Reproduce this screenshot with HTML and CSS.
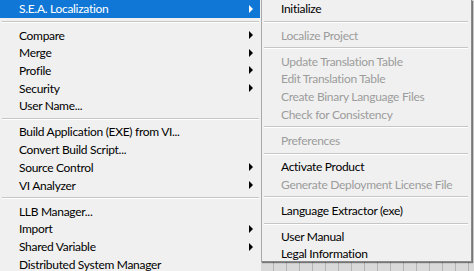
FILE: index.html
```html
<!DOCTYPE html>
<html>
<head>
<meta charset="utf-8">
<link rel="stylesheet" href="styles.css">
</head>
<body>
<div class="screen">
  <div class="menu">
    <div class="item active"><span>S.E.A. Localization</span><i class="arrow"></i></div>
    <div class="sep"></div>
    <div class="item"><span>Compare</span><i class="arrow"></i></div>
    <div class="item"><span>Merge</span><i class="arrow"></i></div>
    <div class="item"><span>Profile</span><i class="arrow"></i></div>
    <div class="item"><span>Security</span><i class="arrow"></i></div>
    <div class="item"><span>User Name...</span></div>
    <div class="sep"></div>
    <div class="item"><span>Build Application (EXE) from VI...</span></div>
    <div class="item"><span>Convert Build Script...</span></div>
    <div class="item"><span>Source Control</span><i class="arrow"></i></div>
    <div class="item"><span>VI Analyzer</span><i class="arrow"></i></div>
    <div class="sep"></div>
    <div class="item"><span>LLB Manager...</span></div>
    <div class="item"><span>Import</span><i class="arrow"></i></div>
    <div class="item"><span>Shared Variable</span><i class="arrow"></i></div>
    <div class="item"><span>Distributed System Manager</span></div>
  </div>
  <div class="submenu">
    <div class="item"><span>Initialize</span></div>
    <div class="sep"></div>
    <div class="item disabled"><span>Localize Project</span></div>
    <div class="sep"></div>
    <div class="item disabled"><span>Update Translation Table</span></div>
    <div class="item disabled"><span>Edit Translation Table</span></div>
    <div class="item disabled"><span>Create Binary Language Files</span></div>
    <div class="item disabled"><span>Check for Consistency</span></div>
    <div class="sep"></div>
    <div class="item disabled"><span>Preferences</span></div>
    <div class="sep"></div>
    <div class="item"><span>Activate Product</span></div>
    <div class="item disabled"><span>Generate Deployment License File</span></div>
    <div class="sep"></div>
    <div class="item"><span>Language Extractor (exe)</span></div>
    <div class="sep"></div>
    <div class="item"><span>User Manual</span></div>
    <div class="item last"><span>Legal Information</span></div>
  </div>
</div>
</body>
</html>
```
FILE: styles.css
```css
html, body {
  margin: 0;
  padding: 0;
}
body {
  width: 474px;
  height: 271px;
  overflow: hidden;
  font-family: Lato, "Liberation Sans", sans-serif;
  font-size: 12px;
  letter-spacing: -0.3px;
  color: #000;
  background-color: #d9d9d9;
  background-image: repeating-linear-gradient(90deg, #b5b5b5 0, #b5b5b5 1px, transparent 1px, transparent 13px);
}
.screen {
  display: flex;
  align-items: flex-start;
  height: 271px;
  overflow: hidden;
}
.menu {
  width: 261px;
  height: 271px;
  flex: none;
  background: #f0f0f0;
  overflow: hidden;
}
.menu .item {
  margin-right: 1px;
}
.submenu {
  width: 209px;
  flex: none;
  background: #f0f0f0;
  border-left: 1px solid #a8a8a8;
  border-right: 1px solid #8a8a8a;
  border-bottom: 1px solid #8a8a8a;
  box-shadow: 1px 1px 1px rgba(0, 0, 0, 0.45);
}
.item {
  height: 17.7px;
  display: flex;
  align-items: center;
  padding-left: 19px;
  white-space: nowrap;
}
.item.active {
  background: #1077d6;
  color: #fff;
}
.item.disabled {
  color: #9c9c9c;
}
.item.last {
  height: 15.5px;
}
.arrow {
  margin-left: auto;
  margin-right: 7px;
  width: 0;
  height: 0;
  border-top: 4px solid transparent;
  border-bottom: 4px solid transparent;
  border-left: 4px solid #000;
}
.item.active .arrow {
  border-left-color: #fff;
}
.sep {
  height: 8.5px;
  display: flex;
  align-items: center;
  padding: 0 2px;
}
.sep::before {
  content: "";
  flex: 1;
  height: 0;
  border-top: 1px solid #c6c6c6;
  border-bottom: 1px solid #ffffff;
}
.submenu .sep {
  padding: 0 3px 0 2px;
}
```
